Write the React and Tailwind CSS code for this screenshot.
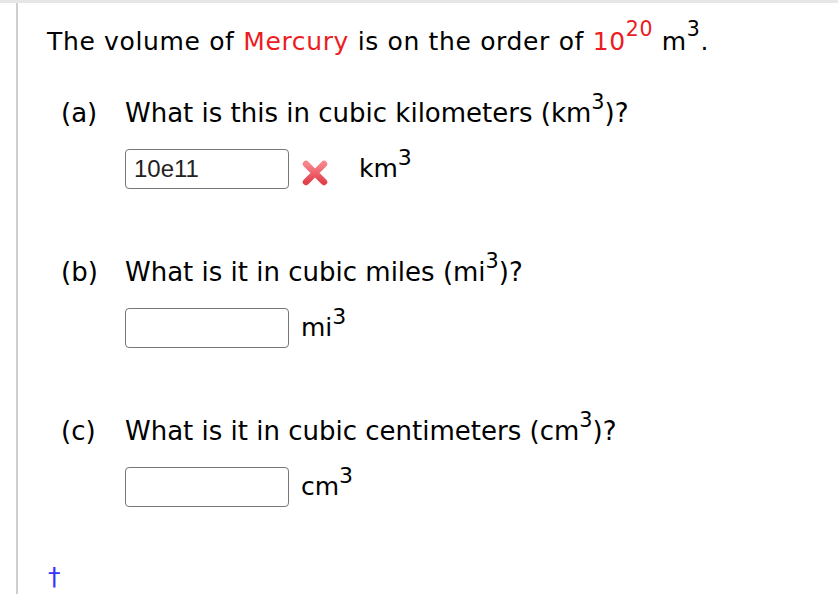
import React from 'react';

const verdana = { fontFamily: '"DejaVu Sans", Verdana, sans-serif' };

// superscript variants: the page's question, unit and heading exponents sit at slightly different heights
const Sup = ({ children, className = 'text-[0.8em] -top-[0.62em]' }) => (
    <span className={`relative leading-none ${className}`}>{children}</span>
);

const WrongMark = () => (
    <svg width="28" height="26" viewBox="0 0 28 26" className="shrink-0 block">
        <defs>
            <linearGradient id="xg" x1="0" y1="0" x2="0" y2="1">
                <stop offset="0" stopColor="#f8858c" />
                <stop offset="1" stopColor="#e2404d" />
            </linearGradient>
        </defs>
        <path d="M5 4 L23 22 M23 4 L5 22" stroke="url(#xg)" strokeWidth="6.5" strokeLinecap="round" />
    </svg>
);

const AnswerBox = ({ value }) => (
    <div className="w-[164px] h-[40px] border border-[#777] rounded-[4px] flex items-center px-[8px] text-[24px] text-[#222]" style={{ fontFamily: '"Liberation Sans", Arial, sans-serif' }}>
        {value}
    </div>
);

const Unit = ({ base }) => (
    <>
        {base}<Sup className="text-[0.88em] -top-[0.55em]">3</Sup>
    </>
);

const Part = ({ label, question, unit, value, wrong }) => (
    <div>
        <div className="flex items-baseline text-[26px] leading-[30px] text-black">
            <span className="w-[64px]">{label}</span>
            <span>{question}</span>
        </div>
        <div className="flex items-center ml-[64px] mt-[21px]">
            <AnswerBox value={value} />
            {wrong ? (
                <div className="flex items-center">
                    <span className="ml-[12px] mt-[8px]"><WrongMark /></span>
                    <span className="ml-[30px] text-[25px] leading-[30px]"><Unit base={unit} /></span>
                </div>
            ) : (
                <span className="ml-[12px] text-[25px] leading-[30px]"><Unit base={unit} /></span>
            )}
        </div>
    </div>
);

export default function App() {
    return (
        <div className="w-[838px] h-[594px] bg-white border-t-[3px] border-[#e6e6e6] overflow-hidden" style={verdana}>
            <div className="ml-[16px] h-full border-l-2 border-[#cfcfcf] pl-[29px] pt-[24px]">
                <p className="text-[25px] text-black leading-[30px] tracking-[0.65px]">
                    The volume of <span className="text-[#ec1c24]">Mercury</span> is on the order of{' '}
                    <span className="text-[#ec1c24]">10<Sup className="text-[0.82em] -top-[0.68em]">20</Sup></span>{' '}m<Sup className="text-[0.82em] -top-[0.68em]">3</Sup>.
                </p>
                <div className="ml-[14px] mt-[41px] flex flex-col gap-[68px]">
                    <Part label="(a)" question={<>What is this in cubic kilometers (km<Sup>3</Sup>)?</>} unit="km" value="10e11" wrong />
                    <Part label="(b)" question={<>What is it in cubic miles (mi<Sup>3</Sup>)?</>} unit="mi" value="" />
                    <Part label="(c)" question={<>What is it in cubic centimeters (cm<Sup>3</Sup>)?</>} unit="cm" value="" />
                </div>
                <div className="mt-[57px] ml-px text-[#3333ff] text-[25px] leading-none">†</div>
            </div>
        </div>
    );
}
